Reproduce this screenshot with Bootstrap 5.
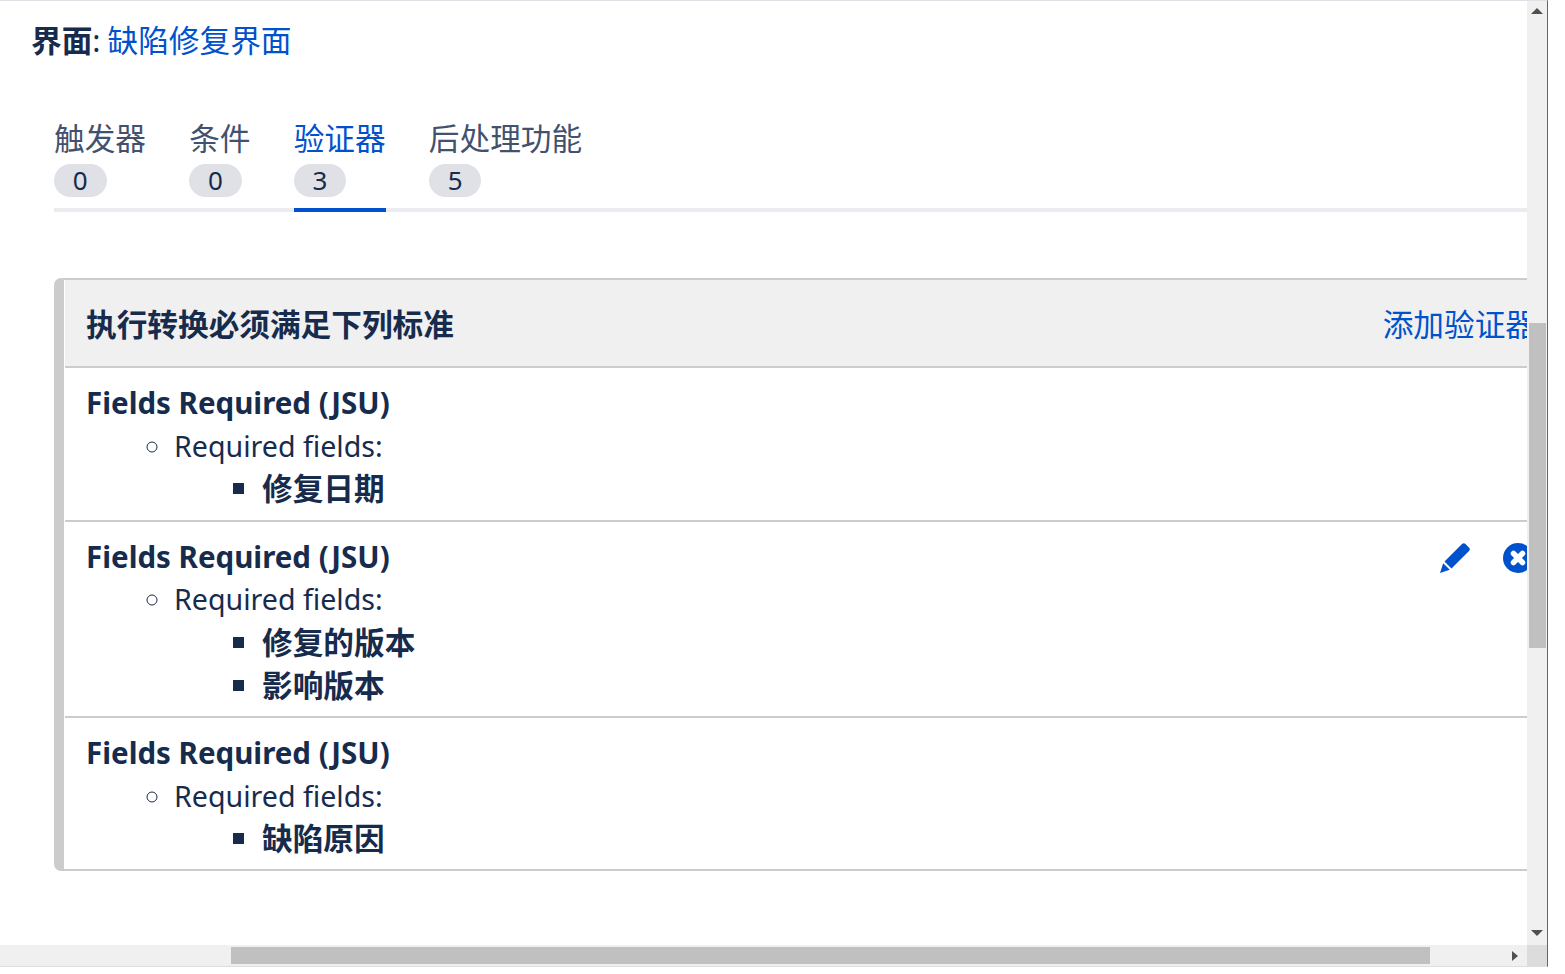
<!DOCTYPE html>
<html lang="zh">
<head>
<meta charset="utf-8">
<title>界面</title>
<link href="https://cdn.jsdelivr.net/npm/bootstrap@5.3.0/dist/css/bootstrap.min.css" rel="stylesheet">
<style>
html,body{height:100%;overflow:hidden;background:#fff}
body{font-family:"Noto Sans","Noto Sans CJK SC",sans-serif;font-size:28.6px;line-height:42.7px;color:#172b4d}
a{color:#0052cc;text-decoration:none}
.shot-frame{width:1548px;height:967px;border-right:1px solid #666;border-bottom:1px solid #ddd;border-top:1px solid #dfe1e6}
.shot-main{height:944px;min-height:0}
.shot-view{width:1527px;overflow:hidden;padding:18px 0 0 33px}
.cjk-text{font-size:30.66px}
.view-title{height:62px;margin-left:-2px}
.view-title strong{font-weight:700}
.view-title a{margin-left:-1px}
.tab-strip{margin:36px 0 0 21px;border-bottom:4px solid #ebecf0;gap:43.2px;height:95px;list-style:none;padding:0;width:1480px}
.tab-strip li{height:95px;border-bottom:4px solid transparent;color:#42526e}
.tab-strip li.is-on{border-bottom-color:#0052cc;color:#0052cc}
.tab-label{display:block;height:47px;line-height:43px;font-size:30.66px}
.tab-count{display:block;width:52.5px;height:33px;line-height:33px;border-radius:17px;background:#dfe1e6;color:#172b4d;font-size:26px;text-align:center}
.rule-box{margin:66px 0 0 21px;width:1506px;border:2px solid #ccc;border-left-width:10px;border-right:0;border-radius:7px 0 0 7px}
.rule-head{height:88px;background:#f0f0f0;border-bottom:2px solid #ccc;padding:2px 24px 0 21px;margin-left:1px}
.rule-head strong{font-size:30.66px;font-weight:700}
.rule-head a{font-size:30.66px;white-space:nowrap}
.rule-item{padding:14px 22px 9.55px 21px;border-bottom:2px solid #ccc;margin-left:1px}
.rule-item:last-child{border-bottom:0;padding-bottom:8.8px}
.rule-name{font-weight:700;font-size:29.5px}
.rule-item ul{margin:0;padding-left:88px;list-style:circle}
.rule-item ul ul{list-style:square;font-weight:700;font-size:30.66px}
.rule-tools{gap:33px;padding:7px 5px 0 0}
.rule-tools svg{display:block;width:30px;height:30px}
.bar-v{width:20px;background:#f0f0f0;height:944px;padding-top:322px}
.bar-v .thumb{width:17px;height:325px;margin-left:2px;background:#c0c0c0}
.bar-arrow-up,.bar-arrow-down,.bar-arrow-right{position:absolute}
.bar-arrow-up{left:1531px;top:7px}
.bar-arrow-down{left:1531px;top:929px}
.bar-arrow-right{left:1512px;top:950px}
.bar-h{height:21px;background:#f0f0f0;padding-top:2px}
.bar-h .thumb{height:17px;width:1199px;margin-left:231px;background:#c0c0c0}
.bar-h .corner{width:20px;height:21px;margin-top:-2px;background:#dcdcdc}
.arrow-fill{fill:#505050}
</style>
</head>
<body>
<div class="shot-frame position-relative">
  <div class="d-flex shot-main">
    <div class="shot-view">
      <div class="view-title cjk-text"><strong>界面</strong>: <a href="#">缺陷修复界面</a></div>
      <ul class="tab-strip d-flex">
        <li><span class="tab-label">触发器</span><span class="tab-count">0</span></li>
        <li><span class="tab-label">条件</span><span class="tab-count">0</span></li>
        <li class="is-on"><span class="tab-label">验证器</span><span class="tab-count">3</span></li>
        <li><span class="tab-label">后处理功能</span><span class="tab-count">5</span></li>
      </ul>
      <div class="rule-box">
        <div class="rule-head d-flex justify-content-between align-items-center">
          <strong>执行转换必须满足下列标准</strong>
          <a href="#">添加验证器</a>
        </div>
        <div class="rule-item">
          <div class="rule-name">Fields Required (JSU)</div>
          <ul><li>Required fields:<ul><li>修复日期</li></ul></li></ul>
        </div>
        <div class="rule-item d-flex justify-content-between align-items-start">
          <div>
            <div class="rule-name">Fields Required (JSU)</div>
            <ul><li>Required fields:<ul><li>修复的版本</li><li>影响版本</li></ul></li></ul>
          </div>
          <div class="rule-tools d-flex">
            <svg viewBox="0 0 30 30" aria-label="编辑"><path fill="#0052cc" d="M22 1a2.500 2.500 0 0 1 3.500 0l3.500 3.500a2.500 2.500 0 0 1 0 3.500L11.500 25.500 4.500 18.500zM3.200 20.200l6.600 6.600L0 30z"/></svg>
            <svg viewBox="0 0 30 30" aria-label="删除"><circle cx="15" cy="15" r="15" fill="#0052cc"/><path d="M10.500 10.500l9 9M19.500 10.500l-9 9" stroke="#fff" stroke-width="5.500" stroke-linecap="round"/></svg>
          </div>
        </div>
        <div class="rule-item">
          <div class="rule-name">Fields Required (JSU)</div>
          <ul><li>Required fields:<ul><li>缺陷原因</li></ul></li></ul>
        </div>
      </div>
    </div>
    <div class="bar-v"><div class="thumb"></div></div>
  </div>
  <div class="bar-h d-flex justify-content-between">
    <div class="thumb"></div>
    <div class="corner"></div>
  </div>
  <svg class="bar-arrow-up" width="12" height="8" viewBox="0 0 12 8"><polygon class="arrow-fill" points="6,0 12,6 0,6"/></svg>
  <svg class="bar-arrow-down" width="12" height="8" viewBox="0 0 12 8"><polygon class="arrow-fill" points="0,0 12,0 6,6"/></svg>
  <svg class="bar-arrow-right" width="8" height="12" viewBox="0 0 8 12"><polygon class="arrow-fill" points="0,0 6,5 0,10"/></svg>
</div>
<script src="https://cdn.jsdelivr.net/npm/bootstrap@5.3.0/dist/js/bootstrap.bundle.min.js"></script>
</body>
</html>
